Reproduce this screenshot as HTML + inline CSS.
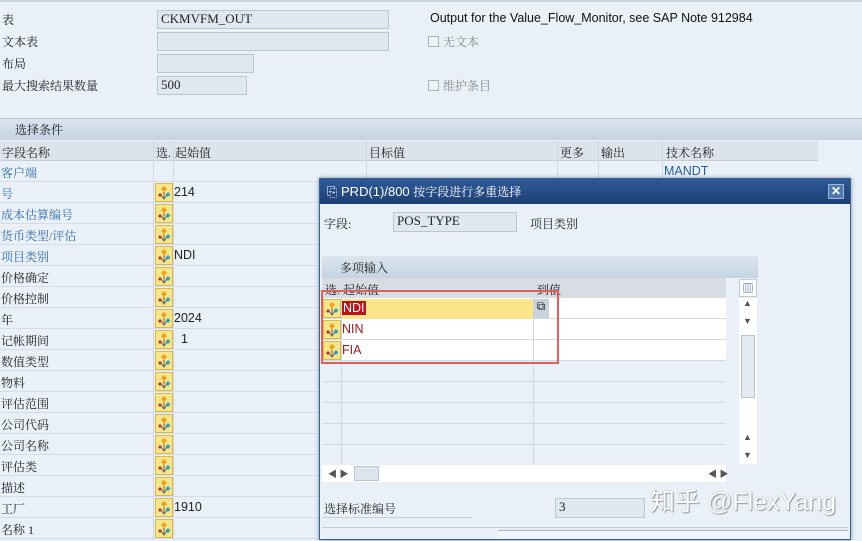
<!DOCTYPE html>
<html><head><meta charset="utf-8"><style>
*{margin:0;padding:0;box-sizing:border-box}
body{width:862px;height:537px;overflow:hidden;background:#e9f0f8;font-family:"Liberation Serif","Noto Serif CJK SC",serif;font-size:12px;color:#222;position:relative}
.a{position:absolute;white-space:nowrap}
.inp{position:absolute;background:#dfe8f1;border:1px solid #b9c6d3;font-family:"Liberation Serif",serif;font-size:13px;padding-left:3px;line-height:16px}
.sans{font-family:"Liberation Sans","Noto Sans CJK SC",sans-serif}
.row{position:absolute;left:0;width:818px;height:21px;border-bottom:1px solid #d4dde7}
.ic{position:absolute;width:18px;height:19px;background:#f7e58a;border:1px solid #d9b850}
.cb{position:absolute;width:11px;height:11px;border:1px solid #a9b3bd;background:#eef2f6}
</style></head><body>
<div class="a" style="left:0;top:0;width:862px;height:2px;background:#c8d3df"></div>
<div class="a" style="left:2px;top:11px">表</div>
<div class="inp" style="left:157px;top:10px;width:232px;height:19px">CKMVFM_OUT</div>
<div class="a sans" style="left:430px;top:11px;font-size:12.5px;color:#111">Output for the Value_Flow_Monitor, see SAP Note 912984</div>
<div class="a" style="left:2px;top:33px">文本表</div>
<div class="inp" style="left:157px;top:32px;width:232px;height:19px"></div>
<div class="cb" style="left:428px;top:36px"></div><div class="a" style="left:443px;top:33px;color:#888">无文本</div>
<div class="a" style="left:2px;top:55px">布局</div>
<div class="inp" style="left:157px;top:54px;width:97px;height:19px"></div>
<div class="a" style="left:2px;top:77px">最大搜索结果数量</div>
<div class="inp" style="left:157px;top:76px;width:90px;height:19px">500</div>
<div class="cb" style="left:428px;top:80px"></div><div class="a" style="left:443px;top:77px;color:#888">维护条目</div>
<div class="a" style="left:0;top:118px;width:862px;height:22px;background:linear-gradient(#dbe5ef,#c4d3e2);border-top:1px solid #b7c6d6"></div>
<div class="a" style="left:15px;top:121px">选择条件</div>
<div class="a" style="left:0;top:141px;width:818px;height:20px;background:#dde3ea;border-bottom:1px solid #c5ced8"></div>
<div class="a" style="left:2px;top:144px">字段名称</div>
<div class="a" style="left:156px;top:144px">选.</div><div class="a" style="left:175px;top:144px">起始值</div>
<div class="a" style="left:369px;top:144px">目标值</div><div class="a" style="left:560px;top:144px">更多</div>
<div class="a" style="left:601px;top:144px">输出</div><div class="a" style="left:666px;top:144px">技术名称</div>
<div class="a" style="left:153px;top:141px;width:1px;height:400px;background:#cfd8e2"></div>
<div class="a" style="left:173px;top:141px;width:1px;height:400px;background:#cfd8e2"></div>
<div class="a" style="left:366px;top:141px;width:1px;height:40px;background:#cfd8e2"></div>
<div class="a" style="left:557px;top:141px;width:1px;height:40px;background:#cfd8e2"></div>
<div class="a" style="left:598px;top:141px;width:1px;height:40px;background:#cfd8e2"></div>
<div class="a" style="left:662px;top:141px;width:1px;height:40px;background:#cfd8e2"></div>
<div class="a sans" style="left:664px;top:164px;color:#2a5d9b;font-size:12.5px">MANDT</div>
<div id="rows"></div>
<script>
var L=[["客户端",1,"",0],["号",1,"214",1],["成本估算编号",1,"",1],["货币类型/评估",1,"",1],["项目类别",1,"NDI",1],["价格确定",0,"",1],["价格控制",0,"",1],["年",0,"2024",1],["记帐期间",0,"  1",1],["数值类型",0,"",1],["物料",0,"",1],["评估范围",0,"",1],["公司代码",0,"",1],["公司名称",0,"",1],["评估类",0,"",1],["描述",0,"",1],["工厂",0,"1910",1],["名称 1",0,"",1]];
var h="";
var icon='<svg width="16" height="17" viewBox="0 0 16 17"><path d="M8 2l3 3-3 3-3-3z" fill="#f0a020"/><path d="M12 8l2.5 2.5L12 13 9.5 10.5z" fill="#3aa0c0"/><path d="M4 9l2 2-2 2-2-2z" fill="#c03020"/><path d="M8 8v7M5 11l3 4 3-4" stroke="#666" fill="none"/></svg>';
function ic(x,y){return '<div class="ic" style="left:'+x+'px;top:'+y+'px">'+icon+'</div>'}
L.forEach(function(r,i){var t=161+21*i;
h+='<div class="row" style="top:'+t+'px"></div><div class="a" style="left:1px;top:'+(t+3)+'px;color:'+(r[1]?'#2f6aa8':'#222')+'">'+r[0]+'</div>';
if(r[3])h+=ic(155,t+1);
if(r[2])h+='<div class="a sans" style="left:174px;top:'+(t+3)+'px;white-space:pre;font-size:12.5px">'+r[2]+'</div>';});
document.getElementById('rows').innerHTML=h;
</script>
<!-- dialog -->
<div class="a" style="left:319px;top:178px;width:532px;height:362px;background:#e9f0f8;border:1px solid #3d5f8f;box-shadow:0 0 4px #7a8ca0"></div>
<div class="a" style="left:320px;top:179px;width:530px;height:25px;background:linear-gradient(#2f5a96,#1d3f75)"></div>
<div class="a sans" style="left:327px;top:183px;color:#fff;font-size:13px">⎘ PRD(1)/800 <span style="font-family:'Noto Serif CJK SC',serif;font-size:12px">按字段进行多重选择</span></div>
<div class="a" style="left:828px;top:184px;width:16px;height:15px;background:#4f78b0;border:1px solid #9fb6d6;color:#fff;font:bold 12px 'Liberation Sans';text-align:center;line-height:13px">✕</div>
<div class="a" style="left:324px;top:215px">字段:</div>
<div class="inp" style="left:393px;top:212px;width:124px;height:20px">POS_TYPE</div>
<div class="a" style="left:530px;top:215px">项目类别</div>
<div class="a" style="left:322px;top:256px;width:436px;height:22px;background:linear-gradient(#dbe5ef,#c4d3e2)"></div>
<div class="a" style="left:340px;top:259px">多项输入</div>
<div class="a" style="left:322px;top:278px;width:404px;height:20px;background:#d8dde3"></div>
<div class="a" style="left:325px;top:281px">选. 起始值</div><div class="a" style="left:537px;top:281px">到值</div>
<div class="a" style="left:322px;top:298px;width:404px;height:166px;background:#eaf0f7"></div>
<div id="dr"></div>
<script>
var s="";for(var i=0;i<8;i++){var t=298+21*i;s+='<div class="a" style="left:322px;top:'+t+'px;width:404px;height:21px;border-bottom:1px solid #d0d9e3;'+(i<3?'background:#fff':'')+'"></div>';}
s+='<div class="a" style="left:341px;top:298px;width:1px;height:166px;background:#cfd8e2"></div><div class="a" style="left:533px;top:298px;width:1px;height:166px;background:#cfd8e2"></div>';
document.getElementById('dr').innerHTML=s;
</script>
<div class="a" style="left:342px;top:299px;width:191px;height:20px;background:#fde68a"></div>
<div class="a" style="left:533px;top:299px;width:16px;height:19px;background:#c9d3de;font:12px 'Liberation Sans';text-align:center">⧉</div>
<div class="a sans" style="left:342px;top:301px;background:#b8141a;color:#fff;font-size:12.5px;padding:0 1px">NDI</div>
<div class="a sans" style="left:342px;top:322px;color:#9c1a1a;font-size:12.5px">NIN</div>
<div class="a sans" style="left:342px;top:343px;color:#9c1a1a;font-size:12.5px">FIA</div>
<script>document.write(ic(323,299)+ic(323,320)+ic(323,341));</script>
<div class="a" style="left:321px;top:290px;width:238px;height:74px;border:2px solid #e0605a"></div>
<div class="a" style="left:739px;top:279px;width:18px;height:18px;background:#fff;border:1px solid #c0c8d0;font-size:11px;text-align:center;color:#2a4f8a">▥</div>
<div class="a" style="left:739px;top:298px;width:18px;height:166px;background:#fff"></div>
<div class="a sans" style="left:743px;top:298px;font-size:9px;color:#555">▲</div>
<div class="a sans" style="left:743px;top:316px;font-size:9px;color:#555">▼</div>
<div class="a" style="left:741px;top:335px;width:14px;height:63px;background:#e3eaf2;border:1px solid #b9c4cf"></div>
<div class="a sans" style="left:743px;top:432px;font-size:9px;color:#555">▲</div>
<div class="a sans" style="left:743px;top:450px;font-size:9px;color:#555">▼</div>
<div class="a" style="left:322px;top:465px;width:404px;height:17px;background:#fff"></div>
<div class="a sans" style="left:328px;top:467px;font-size:9px;color:#555">◀ ▶</div>
<div class="a" style="left:354px;top:466px;width:25px;height:15px;background:#dde5ee;border:1px solid #bcc7d2"></div>
<div class="a sans" style="left:708px;top:467px;font-size:9px;color:#555">◀ ▶</div>
<div class="a" style="left:324px;top:500px">选择标准编号</div>
<div class="a" style="left:322px;top:517px;width:150px;height:1px;background:#c5cfda"></div>
<div class="inp" style="left:555px;top:498px;width:90px;height:20px">3</div>
<div class="a sans" style="left:650px;top:482px;font-size:25px;color:#fff;text-shadow:0 0 1px #888,1px 1px 1px #999">知乎 @FlexYang</div>
<div class="a" style="left:322px;top:527px;width:526px;height:1px;background:#c5cfda"></div>
<div class="a" style="left:498px;top:530px;width:350px;height:8px;border-top:1px solid #a9b5c2;background:#f3f6fa"></div>
</body></html>
